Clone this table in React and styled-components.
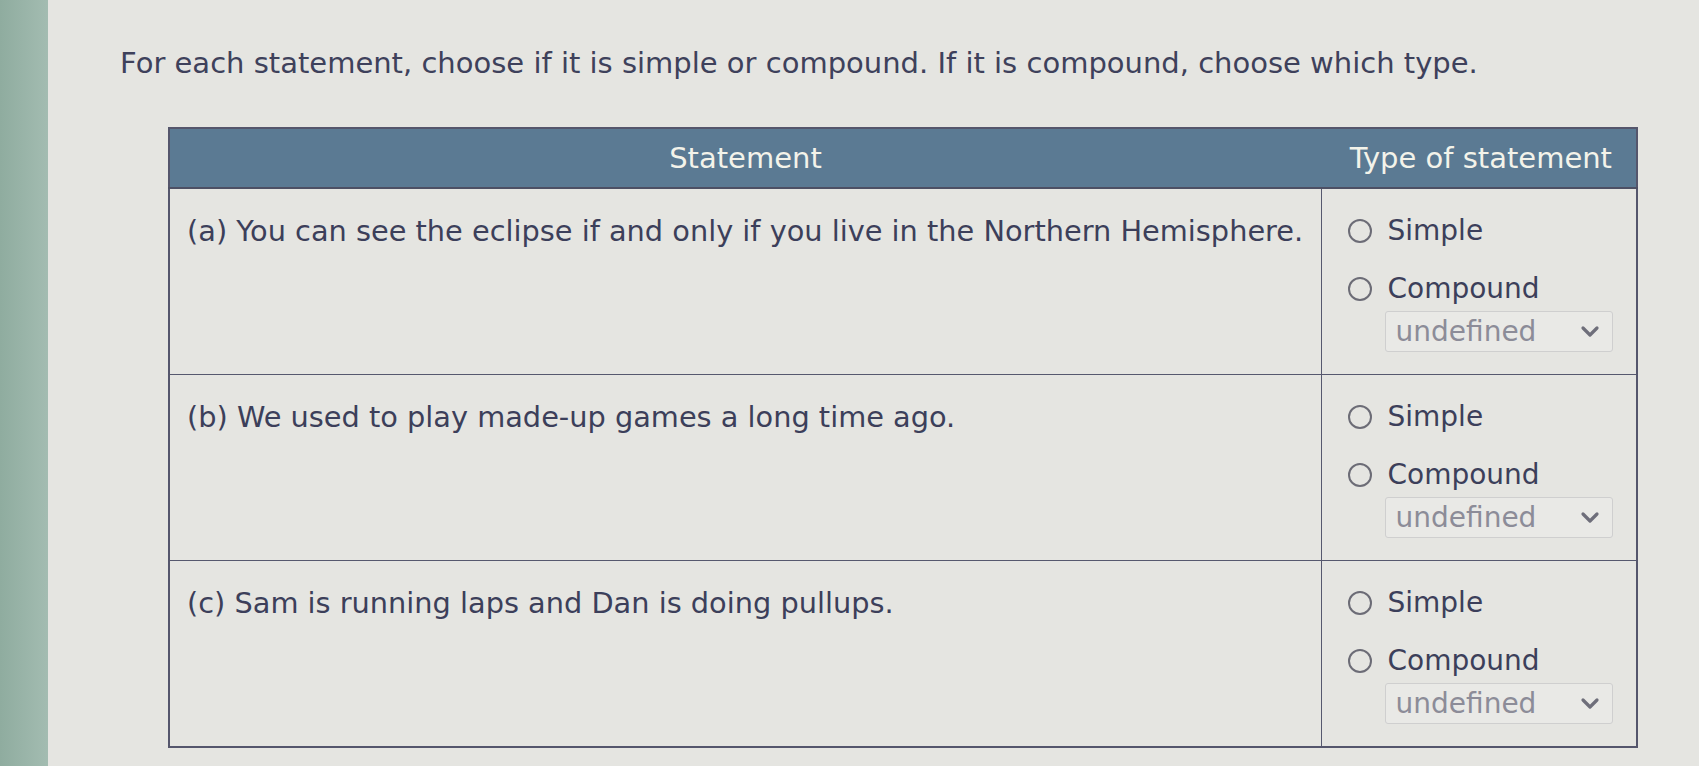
import React from "react";
import styled, { createGlobalStyle } from "styled-components";

const Global = createGlobalStyle`
  html, body { margin: 0; padding: 0; }
  body {
    background: #e5e5e1;
    font-family: "DejaVu Sans", Verdana, sans-serif;
    color: #3c3f5a;
  }
`;

const Page = styled.div`
  display: flex;
  min-height: 766px;
  width: 1699px;
  overflow: hidden;
`;

const Strip = styled.div`
  flex: 0 0 48px;
  background: linear-gradient(90deg, #8fac9f 0%, #a3bcb1 100%);
`;

const Content = styled.main`
  flex: 1;
  padding: 46px 0 0 72px;
`;

const Title = styled.h1`
  margin: 0;
  font-size: 29px;
  font-weight: normal;
  line-height: 34px;
  color: #3e415b;
  white-space: nowrap;
`;

const Table = styled.table`
  margin: 47px 0 0 48px;
  width: 1470px;
  border-collapse: collapse;
  border: 2px solid #55566c;
`;

const HeadCell = styled.th`
  background: #5b7a93;
  color: #f3f3ea;
  font-weight: normal;
  font-size: 29px;
  height: 58px;
  padding: ${(p) => (p.$align === "right" ? "0 24px 0 10px" : "0 14px")};
  text-align: ${(p) => (p.$align === "right" ? "right" : "center")};
  white-space: nowrap;
  border-bottom: 2px solid #4d5064;
`;

const Cell = styled.td`
  box-sizing: border-box;
  vertical-align: top;
  border: 1.5px solid #56586e;
  padding: ${(p) => (p.$choice ? "24px 22px 22px 26px" : "24px 12px 0 17px")};
  width: ${(p) => (p.$choice ? "316px" : "auto")};
  font-size: 28.8px;
  line-height: 36px;
  white-space: nowrap;
`;

const Options = styled.div`
  display: flex;
  flex-direction: column;
`;

const Option = styled.label`
  display: flex;
  align-items: center;
  gap: 16px;
  height: 36px;
  font-size: 28px;
  color: #3c3f5a;
  margin-top: ${(p) => (p.$spaced ? "22px" : "0")};
`;

const Radio = styled.span`
  box-sizing: border-box;
  width: 24px;
  height: 24px;
  border-radius: 50%;
  border: 2px solid #6c6c76;
  flex: 0 0 24px;
`;

const Select = styled.div`
  box-sizing: border-box;
  margin: 4px 0 0 37px;
  width: 228px;
  height: 41px;
  border: 1.5px solid #cfcfcf;
  border-radius: 3px;
  background: #e9e9e6;
  display: flex;
  align-items: center;
  justify-content: space-between;
  padding: 0 12px 0 10px;
  color: #8c8c98;
  font-size: 28px;
`;

const Chevron = () => (
  <svg width="20" height="13" viewBox="0 0 20 13" aria-hidden="true">
    <path d="M3 3 L10 10 L17 3" fill="none" stroke="#6e6e7a" strokeWidth="3.2" strokeLinecap="round" strokeLinejoin="round" />
  </svg>
);

const rows = [
  "(a) You can see the eclipse if and only if you live in the Northern Hemisphere.",
  "(b) We used to play made-up games a long time ago.",
  "(c) Sam is running laps and Dan is doing pullups.",
];

export default function App() {
  return (
    <>
      <Global />
      <Page>
        <Strip />
        <Content>
          <Title>For each statement, choose if it is simple or compound. If it is compound, choose which type.</Title>
          <Table>
            <thead>
              <tr>
                <HeadCell>Statement</HeadCell>
                <HeadCell $align="right">Type of statement</HeadCell>
              </tr>
            </thead>
            <tbody>
              {rows.map((r) => (
                <tr key={r}>
                  <Cell>{r}</Cell>
                  <Cell $choice>
                    <Options>
                      <Option>
                        <Radio />
                        Simple
                      </Option>
                      <Option $spaced>
                        <Radio />
                        Compound
                      </Option>
                      <Select>
                        undefined
                        <Chevron />
                      </Select>
                    </Options>
                  </Cell>
                </tr>
              ))}
            </tbody>
          </Table>
        </Content>
      </Page>
    </>
  );
}
